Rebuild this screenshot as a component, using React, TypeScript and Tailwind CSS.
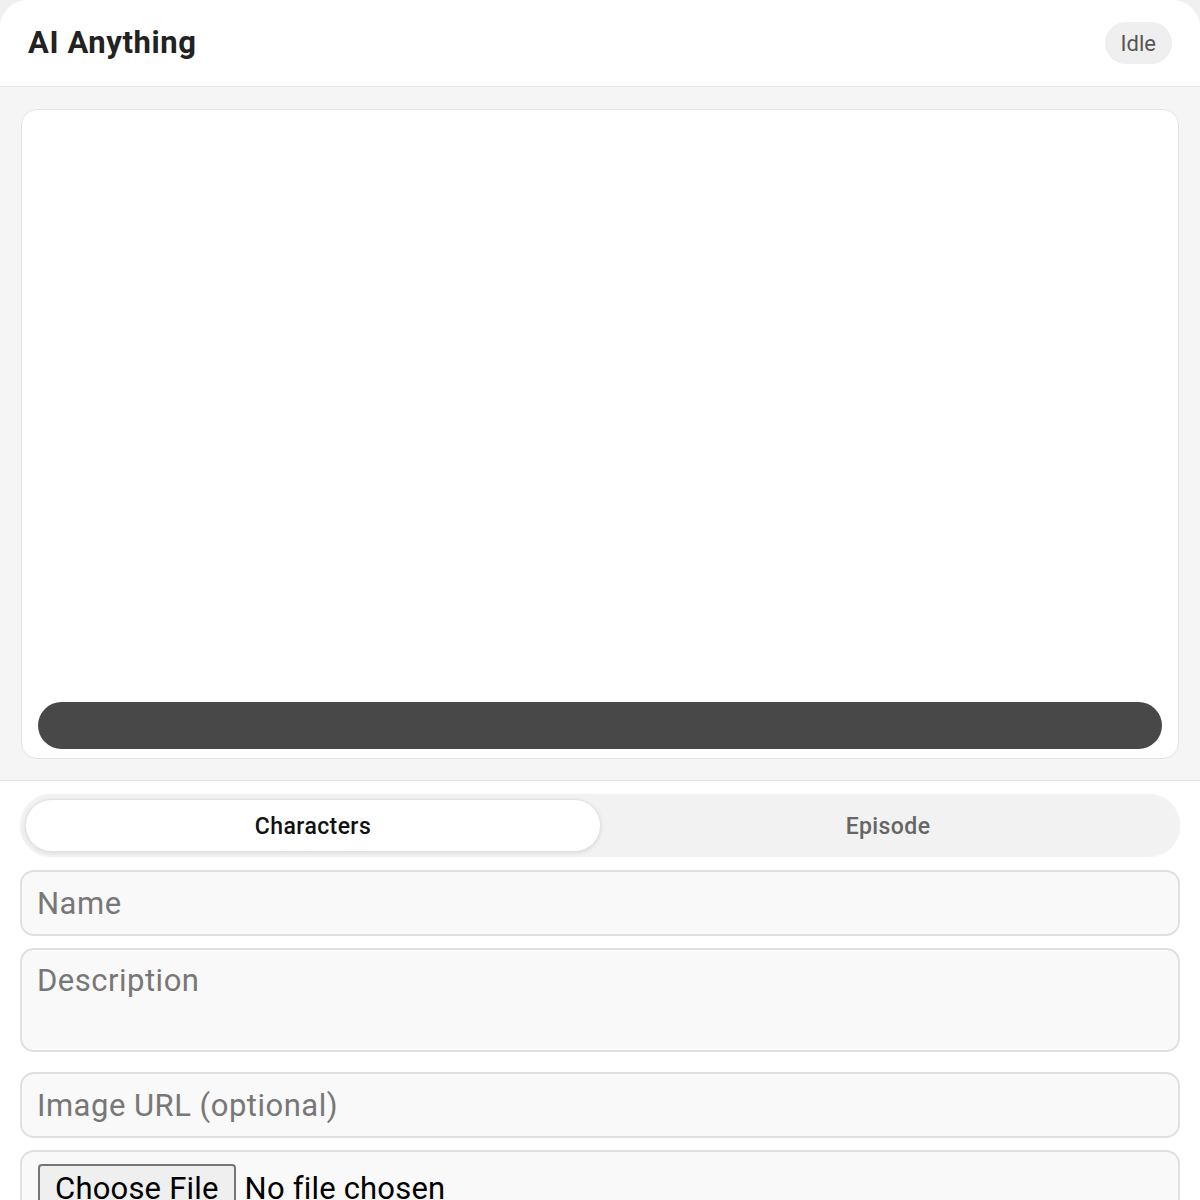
import React from "react";

export default function App() {
  return (
    <div className="min-h-[1200px] bg-[#f0f0f0]" style={{ fontFamily: "Roboto, 'Noto Sans', sans-serif" }}>
      <div className="rounded-t-[28px] bg-white overflow-hidden">
        <header className="h-[87px] flex items-center justify-between pl-[28px] pr-[28px] border-b border-[#e6e6e6] bg-white">
          <h1 className="text-[31px] font-bold text-[#222] tracking-[0.6px]">AI Anything</h1>
          <span className="h-[42px] px-[16px] rounded-full bg-[#efefef] text-[22px] text-[#555] flex items-center">Idle</span>
        </header>
        <section className="bg-[#f5f5f5] px-[21px] pt-[22px] pb-[21px] border-b border-[#e2e2e2]">
          <div className="h-[650px] bg-white border border-[#e4e4e4] rounded-[16px] flex flex-col justify-end px-[16px] pb-[9px]">
            <div className="h-[47px] rounded-full bg-[#484848]" />
          </div>
        </section>
        <section className="bg-white px-[20px] pt-[13px] flex flex-col">
          <div className="h-[63px] rounded-full bg-[#f2f2f2] p-[5px] flex shadow-[0_0_2px_rgba(0,0,0,0.06)]">
            <button className="flex-1 rounded-full bg-white border border-[#e2e2e2] shadow-[0_1px_4px_rgba(0,0,0,0.1)] pt-[3px] text-[23px] font-medium tracking-[0.4px] text-[#111]">
              Characters
            </button>
            <button className="flex-1 rounded-full pt-[3px] text-[23px] font-medium tracking-[0.4px] text-[#666]">Episode</button>
          </div>
          <input
            placeholder="Name"
            className="mt-[13px] h-[66px] w-full rounded-[14px] border-2 border-[#e0e0e0] bg-[#f9f9f9] px-[15px] text-[31px] tracking-[0.5px] text-[#222] placeholder:text-[#777] outline-none"
          />
          <textarea
            placeholder="Description"
            className="mt-[12px] h-[104px] w-full rounded-[14px] border-2 border-[#e0e0e0] bg-[#f9f9f9] px-[15px] pt-[8px] text-[31px] tracking-[0.5px] text-[#222] placeholder:text-[#777] outline-none resize-none block"
          />
          <input
            placeholder="Image URL (optional)"
            className="mt-[20px] h-[66px] w-full rounded-[14px] border-2 border-[#e0e0e0] bg-[#f9f9f9] px-[15px] text-[31px] tracking-[0.5px] text-[#222] placeholder:text-[#777] outline-none"
          />
          <div className="mt-[12px] h-[80px] w-full rounded-[14px] border-2 border-[#e0e0e0] bg-[#f9f9f9] px-[16px] pt-[12px]">
            <input
              type="file"
              className="text-[31px] tracking-[0.2px] text-black file:mr-[9px] file:px-[15px] file:border-2 file:border-[#767676] file:rounded-[4px] file:bg-[#efefef] file:text-black file:text-[31px]"
              style={{ fontFamily: "Roboto, sans-serif" }}
            />
          </div>
        </section>
      </div>
    </div>
  );
}
